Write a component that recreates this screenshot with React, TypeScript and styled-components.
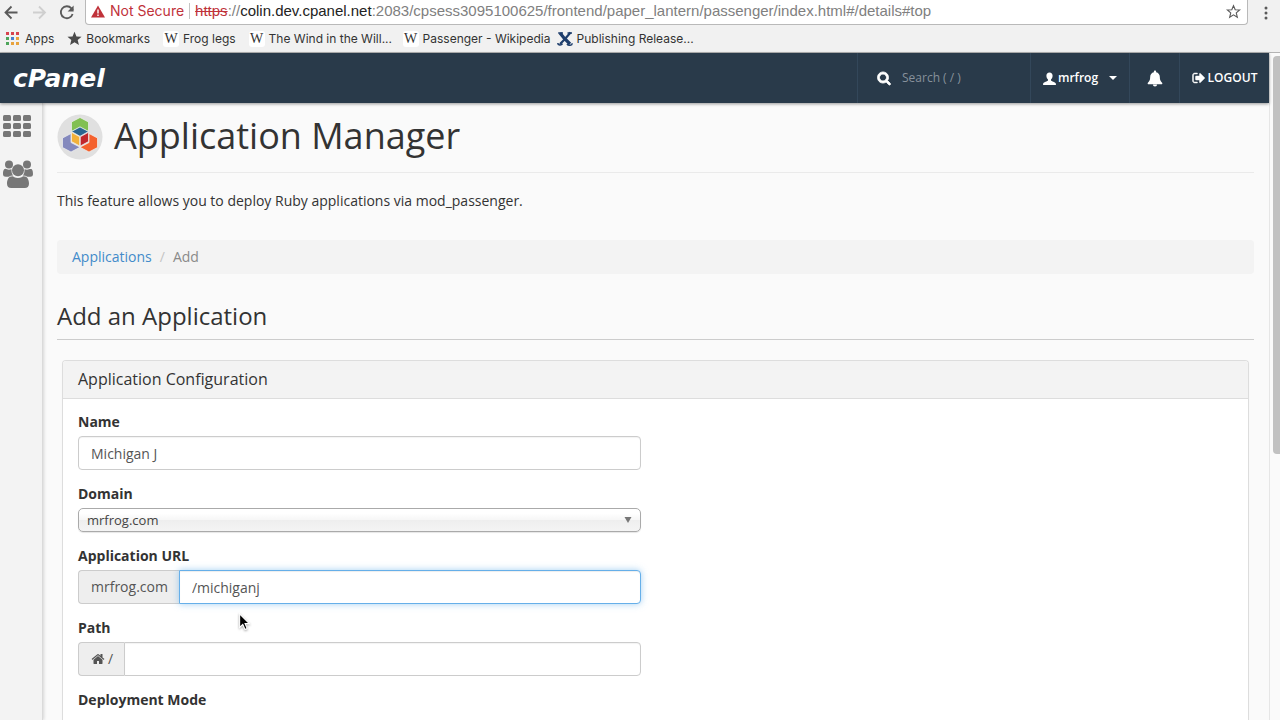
import React from "react";
import styled, { createGlobalStyle, css } from "styled-components";

const GlobalStyle = createGlobalStyle`
  *, *::before, *::after { box-sizing: border-box; }
  body {
    margin: 0;
    background: #fafafa;
    color: #333;
    font-family: "Open Sans", "Noto Sans", sans-serif;
    font-size: 14px;
    line-height: 20px;
  }
  input, select, button { font: inherit; color: inherit; }
  button { background: none; border: 0; padding: 0; }
`;

const Window = styled.div`
  position: relative;
  display: flex;
  flex-direction: column;
  height: 100vh;
  overflow: hidden;
`;

/* Browser chrome */

const Chrome = styled.div`
  flex: none;
  background: #f1f1f1;
  border-bottom: 1px solid #b4b4b4;
  font-family: Inter, Roboto, sans-serif;
  color: #333;
`;

const Toolbar = styled.div`
  display: flex;
  height: 25px;
`;

const NavButtons = styled.div`
  display: flex;
  align-items: center;
  gap: 12px;
  width: 85px;
  padding-left: 3px;
`;

const NavButton = styled.button<{ $dim?: boolean }>`
  display: flex;
  color: ${(p) => (p.$dim ? "#cfcfcf" : "#5a5a5a")};
`;

const AddressBar = styled.div`
  flex: 1;
  min-width: 0;
  display: flex;
  align-items: center;
  gap: 5px;
  padding: 0 7px 2px 5px;
  background: #fff;
  border: 1px solid #b9b9b9;
  border-top: 0;
  border-radius: 0 0 4px 4px;
  white-space: nowrap;
`;

const Insecure = styled.span`
  display: flex;
  align-items: center;
  gap: 5px;
  color: #c0323a;
  font-size: 14px;
`;

const Divider = styled.span`
  width: 1px;
  height: 16px;
  background: #c4c4c4;
`;

const Url = styled.span`
  flex: 1;
  min-width: 0;
  overflow: hidden;
  color: #808080;
  font-family: "Liberation Sans", Arial, sans-serif;
  font-size: 15px;
  s { color: #c0323a; }
  b { font-weight: 400; color: #222; }
`;

const MenuButton = styled.button`
  display: flex;
  align-items: center;
  justify-content: center;
  width: 32px;
  padding-left: 4px;
`;

const Bookmarks = styled.nav`
  display: flex;
  align-items: center;
  gap: 7px;
  height: 27px;
  padding-left: 5px;
  font-size: 12px;
`;

const Bookmark = styled.a`
  display: flex;
  align-items: center;
  gap: 4px;
  max-width: 147px;
  padding-right: 6px;
  color: #333;
  text-decoration: none;
  white-space: nowrap;
  svg { flex: none; }
`;

const WikiMark = styled.span`
  flex: none;
  width: 16px;
  background: #fff;
  border-radius: 3px;
  font: 14px/16px "Liberation Serif", serif;
  text-align: center;
`;

/* Page frame */

const Viewport = styled.div`
  flex: 1;
  min-height: 0;
  display: flex;
`;

const Page = styled.div`
  flex: 1;
  min-width: 0;
  display: flex;
  flex-direction: column;
`;

const ScrollTrack = styled.div`
  width: 11px;
  padding: 3px 0 0 3px;
  border-left: 1px solid #e6e6e6;
  background: #fafafa;
`;

const ScrollThumb = styled.div`
  height: 60%;
  border-radius: 4px 0 0 4px;
  background: #c1c1c1;
`;

const Header = styled.header`
  flex: none;
  display: flex;
  align-items: stretch;
  height: 50px;
  background: #293a4a;
  color: #fff;
  box-shadow: 0 1px 3px rgba(0, 0, 0, 0.4);
  z-index: 1;
`;

const Logo = styled.a`
  flex: 1;
  display: flex;
  align-items: center;
  padding-left: 13px;
  color: #fff;
  font: italic bold 25px "DejaVu Sans", sans-serif;
  text-decoration: none;
`;

const headerCell = css<{ $width: number }>`
  display: flex;
  align-items: center;
  width: ${(p) => p.$width}px;
  border-left: 1px solid #33475a;
`;

const SearchCell = styled.label<{ $width: number }>`
  ${headerCell}
  gap: 11px;
  padding-left: 19px;
  svg { flex: none; }
`;

const SearchInput = styled.input`
  width: 100%;
  min-width: 0;
  padding: 0;
  border: 0;
  background: none;
  outline: 0;
  font-size: 12px;
  &::placeholder { color: #87919b; opacity: 1; }
`;

const HeaderButton = styled.button<{ $width: number }>`
  ${headerCell}
  justify-content: center;
  gap: 2px;
  font-size: 12px;
  font-weight: 600;
`;

const Caret = styled.span`
  margin-left: 9px;
  border: 4px solid transparent;
  border-top-color: #fff;
  border-bottom: 0;
`;

const Body = styled.div`
  flex: 1;
  min-height: 0;
  display: flex;
`;

const Sidebar = styled.nav`
  width: 43px;
  display: flex;
  flex-direction: column;
  gap: 23px;
  padding: 12px 0 0 3px;
  background: #f3f3f3;
  border-right: 1px solid #dadada;
  box-shadow: 1px 0 3px rgba(0, 0, 0, 0.15);
  a { display: flex; color: #777; }
`;

const Content = styled.main`
  flex: 1;
  min-width: 0;
  display: flex;
  flex-direction: column;
  padding: 11px 15px 0 14px;
`;

const TitleRow = styled.div`
  display: flex;
  gap: 11px;
  padding-bottom: 12px;
  border-bottom: 1px solid #eaeaea;
`;

const Title = styled.h1`
  margin: 0;
  font-size: 36px;
  font-weight: 400;
  line-height: 44px;
`;

const Intro = styled.p`
  margin: 18px 0 29px;
`;

const Breadcrumb = styled.nav`
  display: flex;
  gap: 8px;
  padding: 7px 15px;
  border-radius: 4px;
  background: #f3f3f3;
  color: #8a8a8a;
  a { color: #428bca; text-decoration: none; }
  i { color: #c4c4c4; font-style: normal; }
`;

const SectionTitle = styled.h2`
  margin: 25px 0 20px;
  padding-bottom: 7px;
  border-bottom: 1px solid #ccc;
  font-size: 24px;
  font-weight: 400;
  line-height: 33px;
`;

const Panel = styled.section`
  flex: 1;
  margin: 0 5px;
  background: #fff;
  border: 1px solid #ddd;
  border-bottom: 0;
  border-radius: 4px 4px 0 0;
  box-shadow: 0 1px 1px rgba(0, 0, 0, 0.05);
`;

const PanelTitle = styled.h3`
  margin: 0;
  padding: 8px 15px 9px;
  border-bottom: 1px solid #ddd;
  border-radius: 3px 3px 0 0;
  background: #f3f3f3;
  font-size: 16px;
  font-weight: 400;
  line-height: 20px;
`;

const Form = styled.form`
  width: 50%;
  padding: 13px 15px 0;
`;

const Field = styled.div`
  margin-bottom: 14px;
`;

const Label = styled.label`
  display: block;
  margin-bottom: 4px;
  font-weight: 700;
`;

const TextInput = styled.input<{ $grouped?: boolean; $active?: boolean }>`
  display: block;
  flex: 1;
  width: 100%;
  min-width: 0;
  height: 34px;
  padding: 6px 12px;
  border: 1px solid #ccc;
  border-radius: ${(p) => (p.$grouped ? "0 4px 4px 0" : "4px")};
  background: #fff;
  box-shadow: inset 0 1px 1px rgba(0, 0, 0, 0.05);
  color: #555;
  outline: 0;
  ${(p) =>
    p.$active &&
    css`
      border-color: #66afe9;
      box-shadow: inset 0 1px 1px rgba(0, 0, 0, 0.07), 0 0 7px rgba(102, 175, 233, 0.6);
    `}
`;

const InputGroup = styled.div`
  display: flex;
`;

const Addon = styled.span`
  display: flex;
  align-items: center;
  gap: 3px;
  padding: 0 11px 0 12px;
  border: 1px solid #ccc;
  border-right: 0;
  border-radius: 4px 0 0 4px;
  background: #eee;
  color: #555;
`;

const SelectBox = styled.div`
  display: grid;
  align-items: center;
  > * { grid-area: 1 / 1; }
  svg { justify-self: end; margin-right: 9px; pointer-events: none; }
`;

const Select = styled.select`
  appearance: none;
  width: 100%;
  height: 24px;
  padding: 0 8px;
  border: 1px solid #aaa;
  border-radius: 5px;
  background: linear-gradient(#fff 20%, #f6f6f6 50%, #eee 52%, #f4f4f4 100%);
  box-shadow: 0 1px 1px rgba(0, 0, 0, 0.1);
  color: #444;
  font-size: 13px;
`;

const Pointer = styled.svg`
  position: absolute;
  left: 238px;
  top: 612px;
  z-index: 2;
  filter: drop-shadow(0 1px 1px rgba(0, 0, 0, 0.35));
`;

/* Icons */

const glyphs = {
  search:
    "M1216 832q0-185-131.5-316.5t-316.5-131.5-316.5 131.5-131.5 316.5 131.5 316.5 316.5 131.5 316.5-131.5 131.5-316.5zm512 832q0 52-38 90t-90 38q-54 0-90-38l-343-342q-179 124-399 124-143 0-273.5-55.5t-225-150-150-225-55.5-273.5 55.5-273.5 150-225 225-150 273.5-55.5 273.5 55.5 225 150 150 225 55.5 273.5q0 220-124 399l343 343q37 37 37 90z",
  signOut:
    "M704 1440q0 4 1 20t.5 26.5-3 23.5-10 19.5-20.5 6.5h-320q-119 0-203.5-84.5t-84.5-203.5v-704q0-119 84.5-203.5t203.5-84.5h320q13 0 22.5 9.5t9.5 22.5q0 4 1 20t.5 26.5-3 23.5-10 19.5-20.5 6.5h-320q-66 0-113 47t-47 113v704q0 66 47 113t113 47h312l11.5 1 11.5 3 8 5.5 7 9 2 13.5zm928-544q0 26-19 45l-544 544q-19 19-45 19t-45-19-19-45v-288h-448q-26 0-45-19t-19-45v-384q0-26 19-45t45-19h448v-288q0-26 19-45t45-19 45 19l544 544q19 19 19 45z",
  home:
    "M1472 992v480q0 26-19 45t-45 19h-384v-384h-256v384h-384q-26 0-45-19t-19-45v-480q0-1 .5-3t.5-3l575-474 575 474q1 2 1 6zm223-69l-62 74q-8 9-21 11h-3q-13 0-21-7l-692-577-692 577q-12 8-24 7-13-2-21-11l-62-74q-8-10-7-23.5t11-21.5l719-599q32-26 76-26t76 26l244 204v-195q0-14 9-23t23-9h192q14 0 23 9t9 23v408l219 182q10 8 11 21.5t-7 23.5z",
};

const Glyph = ({ name, size, weight = 0 }: { name: keyof typeof glyphs; size: number; weight?: number }) => (
  <svg
    width={size}
    height={size}
    viewBox="0 0 1792 1792"
    fill="currentColor"
    stroke="currentColor"
    strokeWidth={weight}
    overflow="visible"
    aria-hidden="true"
  >
    <path d={glyphs[name]} />
  </svg>
);

const BackIcon = ({ flip }: { flip?: boolean }) => (
  <svg width="16" height="16" viewBox="0 0 16 16" fill="none" stroke="currentColor" strokeWidth="1.8">
    <path d={flip ? "M2 7.500h12M8 1.500l6 6-6 6" : "M14.500 7.500H2.500M8.500 1.500l-6 6 6 6"} />
  </svg>
);

const ReloadIcon = () => (
  <svg width="16" height="16" viewBox="0 0 16 16" fill="none" stroke="currentColor" strokeWidth="1.8">
    <path d="M13.600 9A6 6 0 1 1 12.400 3.300L14 5" />
    <path d="M14.600.5v6h-6z" fill="currentColor" stroke="none" />
  </svg>
);

const WarningIcon = () => (
  <svg width="14" height="13" viewBox="0 0 14 13">
    <path d="M7 0.500L14 12.500H0z" fill="#c0323a" />
    <path d="M6.300 4.500h1.400v4H6.300zM6.300 9.600h1.400V11H6.300z" fill="#fff" />
  </svg>
);

const starPath = "M8 .8l2.100 5 5.400.4-4.100 3.500 1.300 5.300L8 12.100 3.300 15l1.300-5.300L.5 6.200l5.400-.4z";

const StarIcon = ({ outline }: { outline?: boolean }) => (
  <svg
    width={outline ? 13 : 15}
    height={outline ? 13 : 15}
    viewBox="0 0 16 16"
    overflow="visible"
    fill={outline ? "none" : "#4a4a4a"}
    stroke={outline ? "#5a5a5a" : "none"}
    strokeWidth="1.400"
  >
    <path d={starPath} />
  </svg>
);

const appsColors = ["#d8434e", "#d8434e", "#d8434e", "#4ea55b", "#4a7fd0", "#e8a33d", "#4ea55b", "#e8a33d", "#e8a33d"];

const AppsIcon = () => (
  <svg width="16" height="15" viewBox="0 0 16 15">
    {appsColors.map((c, i) => (
      <rect key={i} x={1 + (i % 3) * 5} y={1 + Math.floor(i / 3) * 5} width="3" height="3" fill={c} />
    ))}
  </svg>
);

const ReleaseIcon = () => (
  <svg width="16" height="16" viewBox="0 0 16 16" fill="none" stroke="#1d3d6b">
    <path d="M3 2l4 5 6 6" strokeWidth="3.200" />
    <path d="M13.500 1.500L8 8l-5 5" strokeWidth="2.200" />
    <path d="M1.200 2H6M10.500 2h4.500" strokeWidth="1.300" />
    <path d="M.8 12c0 2.400 3.600 2.600 4.700.6M10 13c1.500 2.200 5.200 1.500 5.200-.8" strokeWidth="1.500" />
  </svg>
);

const UserIcon = () => (
  <svg width="13" height="13" viewBox="0 0 13 13" fill="currentColor">
    <path d="M6.500.5c2 0 3.100 1.400 3.100 3.300 0 1.500-.7 3-1.600 3.700v.9c.3.700 4.500 1.600 4.900 3.200V13H.1v-1.400c.4-1.600 4.600-2.500 4.900-3.200v-.9C4.100 6.800 3.400 5.300 3.400 3.800 3.400 1.900 4.500.5 6.500.5z" />
  </svg>
);

const BellIcon = () => (
  <svg width="16" height="17" viewBox="0 0 16 17" fill="currentColor">
    <path d="M8 .6c.6 0 1.100.4 1.100 1v.6c2.400.5 3.700 2.300 3.700 4.600 0 3.200.9 4.900 2.500 6.100.2.700-.2 1.300-.9 1.300H1.600c-.7 0-1.100-.6-.9-1.300 1.600-1.200 2.500-2.900 2.500-6.100 0-2.300 1.300-4.100 3.700-4.600v-.6c0-.6.5-1 1.100-1z" />
    <path d="M5.900 14.600h4.200a2.100 2 0 0 1-4.200 0z" />
  </svg>
);

const GridIcon = () => (
  <svg width="28" height="22" viewBox="0 0 28 22" fill="currentColor">
    {[0, 1, 2].map((r) =>
      [0, 1, 2].map((c) => <rect key={`${r}${c}`} x={c * 10} y={r * 8} width="8" height="6" rx="1.500" />)
    )}
  </svg>
);

const UsersIcon = () => (
  <svg width="30" height="29" viewBox="0 0 30 29" fill="currentColor">
    <circle cx="6" cy="4.500" r="4" />
    <circle cx="24" cy="4.500" r="4" />
    <path d="M2.500 8.700c1 0 1.800 1 3.500 1 1 0 1.600-.2 2.500-.5-.2 2.600.4 4.500 1.600 6.300-1.800 0-3.300.4-4.500 1.200H2.800C1.200 16.700 0 15.900 0 14.200 0 12.100.3 8.700 2.500 8.700zM27.500 8.700c-1 0-1.800 1-3.500 1-1 0-1.600-.2-2.500-.5.2 2.600-.4 4.500-1.600 6.300 1.800 0 3.300.4 4.500 1.200h2.800c1.600 0 2.800-.8 2.800-2.500 0-2.100-.3-5.500-2.500-5.500z" />
    <circle cx="15" cy="10.300" r="6" />
    <path d="M9.500 16.200c.8 0 2.500 1.900 5.500 1.900s4.700-1.900 5.500-1.900c4 0 5.500 3.600 5.500 7.600 0 2.800-1.600 4.200-4.200 4.200H8.200C5.600 28 4 26.600 4 23.800c0-4 1.500-7.600 5.500-7.600z" />
  </svg>
);

const ManagerIcon = () => (
  <svg width="46" height="46" viewBox="0 0 46 46">
    <circle cx="23" cy="23" r="22.500" fill="#e0e0e0" />
    <g stroke="#f0f0f0" strokeWidth="0.700">
      <path d="M23 3.500l8.500 4.500v9.500L23 13l-8.500 4.500V8z" fill="#82c052" />
      <path d="M14 19.500v9l9 4.700-9 4.800-8.500-4.500v-9.500z" fill="#8489bd" />
      <path d="M32 19.500v9l-9 4.700 9 4.800 8.500-4.500v-9.500z" fill="#f4612d" />
      <path d="M23 13l8.500 4.500-8.500 4.800-8.500-4.800z" fill="#2a6591" />
      <path d="M14.500 18.300l8.200 4.500V32l-8.200-4.400z" fill="#f2b13b" />
      <path d="M31.500 18.300l-8.200 4.500V32l8.200-4.400z" fill="#c1272d" />
    </g>
  </svg>
);

const wikiLinks = ["Frog legs", "The Wind in the Will...", "Passenger - Wikipedia"];

export default function App() {
  return (
    <Window>
      <GlobalStyle />
      <Chrome>
        <Toolbar>
          <NavButtons>
            <NavButton aria-label="Back"><BackIcon /></NavButton>
            <NavButton aria-label="Forward" $dim><BackIcon flip /></NavButton>
            <NavButton aria-label="Reload"><ReloadIcon /></NavButton>
          </NavButtons>
          <AddressBar>
            <Insecure><WarningIcon />Not Secure</Insecure>
            <Divider />
            <Url>
              <s>https</s>://<b>colin.dev.cpanel.net</b>
              :2083/cpsess3095100625/frontend/paper_lantern/passenger/index.html#/details#top
            </Url>
            <NavButton aria-label="Bookmark this page"><StarIcon outline /></NavButton>
          </AddressBar>
          <MenuButton aria-label="Menu">
            <svg width="4" height="14" viewBox="0 0 4 14" fill="#5a5a5a">
              <circle cx="2" cy="2" r="1.500" />
              <circle cx="2" cy="7" r="1.500" />
              <circle cx="2" cy="12" r="1.500" />
            </svg>
          </MenuButton>
        </Toolbar>
        <Bookmarks>
          <Bookmark href="#apps"><AppsIcon />Apps</Bookmark>
          <Bookmark href="#bookmarks"><StarIcon />Bookmarks</Bookmark>
          {wikiLinks.map((t) => (
            <Bookmark href="#wiki" key={t}><WikiMark>W</WikiMark>{t}</Bookmark>
          ))}
          <Bookmark href="#release"><ReleaseIcon />Publishing Release...</Bookmark>
        </Bookmarks>
      </Chrome>

      <Viewport>
        <Page>
          <Header>
            <Logo href="#home">cPanel</Logo>
            <SearchCell $width={173}>
              <Glyph name="search" size={14} weight={110} />
              <SearchInput placeholder="Search ( / )" aria-label="Search" />
            </SearchCell>
            <HeaderButton $width={99}><UserIcon />mrfrog<Caret /></HeaderButton>
            <HeaderButton $width={50} aria-label="Notifications"><BellIcon /></HeaderButton>
            <HeaderButton $width={90}><Glyph name="signOut" size={14} weight={60} />LOGOUT</HeaderButton>
          </Header>
          <Body>
            <Sidebar>
              <a href="#home" aria-label="Home"><GridIcon /></a>
              <a href="#users" aria-label="User Manager"><UsersIcon /></a>
            </Sidebar>
            <Content>
              <TitleRow>
                <ManagerIcon />
                <Title>Application Manager</Title>
              </TitleRow>
              <Intro>This feature allows you to deploy Ruby applications via mod_passenger.</Intro>
              <Breadcrumb aria-label="Breadcrumb">
                <a href="#applications">Applications</a>
                <i>/</i>
                <span>Add</span>
              </Breadcrumb>
              <SectionTitle>Add an Application</SectionTitle>
              <Panel>
                <PanelTitle>Application Configuration</PanelTitle>
                <Form>
                  <Field>
                    <Label htmlFor="name">Name</Label>
                    <TextInput id="name" defaultValue="Michigan J" />
                  </Field>
                  <Field>
                    <Label htmlFor="domain">Domain</Label>
                    <SelectBox>
                      <Select id="domain">
                        <option>mrfrog.com</option>
                      </Select>
                      <svg width="8" height="6" viewBox="0 0 8 6"><path d="M0.500 0h7L4 6z" fill="#777" /></svg>
                    </SelectBox>
                  </Field>
                  <Field>
                    <Label htmlFor="url">Application URL</Label>
                    <InputGroup>
                      <Addon>mrfrog.com</Addon>
                      <TextInput id="url" defaultValue="/michiganj" $grouped $active />
                    </InputGroup>
                  </Field>
                  <Field>
                    <Label htmlFor="path">Path</Label>
                    <InputGroup>
                      <Addon><Glyph name="home" size={14} />/</Addon>
                      <TextInput id="path" $grouped />
                    </InputGroup>
                  </Field>
                  <Label as="div">Deployment Mode</Label>
                </Form>
              </Panel>
            </Content>
          </Body>
        </Page>
        <ScrollTrack><ScrollThumb /></ScrollTrack>
      </Viewport>

      <Pointer width="13" height="20" viewBox="0 0 12 18" aria-hidden="true">
        <path d="M1.500 1.500v12.500l2.900-2.700 2.100 4.700 2-.9-2-4.600h4z" fill="#000" stroke="#fff" strokeWidth="1" />
      </Pointer>
    </Window>
  );
}
